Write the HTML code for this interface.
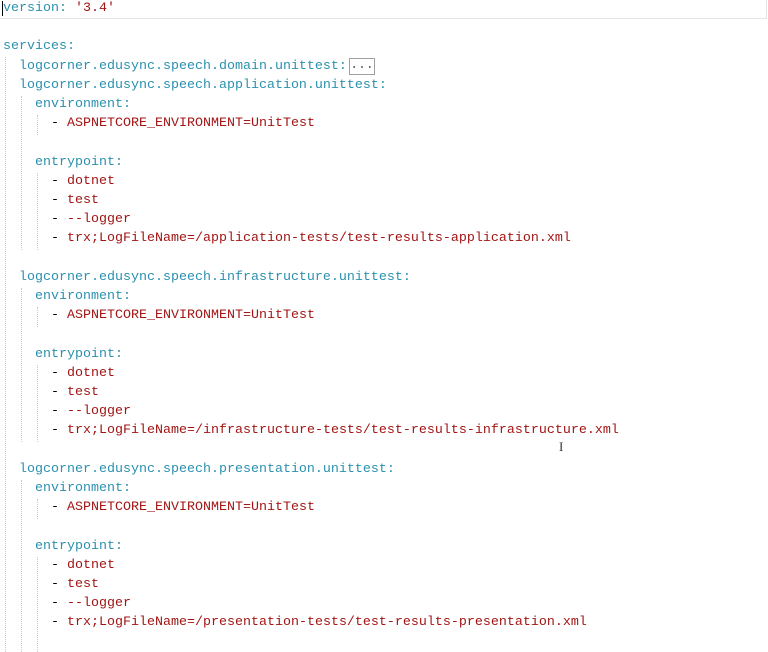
<!DOCTYPE html>
<html><head><style>
body{margin:0;width:768px;height:650px;background:#fff;overflow:hidden;position:relative;font-family:"Liberation Mono",monospace;font-size:13.33px}
#w{position:absolute;left:0;top:2px;width:768px;height:650px}
.l{position:absolute;left:3px;height:19.2px;line-height:19.2px;white-space:pre;color:#000}
.k{color:#2b91af}.v{color:#a31515}
.g{position:absolute;width:0;border-left:1px dotted #c8c8c8}
.cur{position:absolute;left:0;top:-4px;width:766px;height:19px;border:1px solid #e4e4e4;border-left:none}
</style></head><body>
<div id="w">
<div class="cur"></div>
<div style="position:absolute;left:2px;top:-1px;width:1px;height:15px;background:#000"></div>
<div class="g" style="left:5px;top:55px;height:595px"></div>
<div class="g" style="left:21px;top:94px;height:154px"></div>
<div class="g" style="left:21px;top:286px;height:154px"></div>
<div class="g" style="left:21px;top:478px;height:172px"></div>
<div class="g" style="left:37px;top:113px;height:20px"></div>
<div class="g" style="left:37px;top:171px;height:77px"></div>
<div class="g" style="left:37px;top:305px;height:20px"></div>
<div class="g" style="left:37px;top:363px;height:77px"></div>
<div class="g" style="left:37px;top:497px;height:20px"></div>
<div class="g" style="left:37px;top:555px;height:95px"></div>
<div class="l" style="top:-3px"><span class="k">version:</span> <span class="v">'3.4'</span></div>
<div class="l" style="top:35.4px"><span class="k">services:</span></div>
<div class="l" style="top:54.6px">  <span class="k">logcorner.edusync.speech.domain.unittest:</span></div>
<div style="position:absolute;left:349px;top:56px;width:24px;height:15px;border:1px solid #a0a0a0;font-size:13px;line-height:12px;text-align:center;color:#555">...</div>
<div class="l" style="top:73.8px">  <span class="k">logcorner.edusync.speech.application.unittest:</span></div>
<div class="l" style="top:93px">    <span class="k">environment:</span></div>
<div class="l" style="top:112.2px">      - <span class="v">ASPNETCORE_ENVIRONMENT=UnitTest</span></div>
<div class="l" style="top:150.6px">    <span class="k">entrypoint:</span></div>
<div class="l" style="top:169.8px">      - <span class="v">dotnet</span></div>
<div class="l" style="top:189px">      - <span class="v">test</span></div>
<div class="l" style="top:208.2px">      - <span class="v">--logger</span></div>
<div class="l" style="top:227.4px">      - <span class="v">trx;LogFileName=/application-tests/test-results-application.xml</span></div>
<div class="l" style="top:265.8px">  <span class="k">logcorner.edusync.speech.infrastructure.unittest:</span></div>
<div class="l" style="top:285px">    <span class="k">environment:</span></div>
<div class="l" style="top:304.2px">      - <span class="v">ASPNETCORE_ENVIRONMENT=UnitTest</span></div>
<div class="l" style="top:342.6px">    <span class="k">entrypoint:</span></div>
<div class="l" style="top:361.8px">      - <span class="v">dotnet</span></div>
<div class="l" style="top:381px">      - <span class="v">test</span></div>
<div class="l" style="top:400.2px">      - <span class="v">--logger</span></div>
<div class="l" style="top:419.4px">      - <span class="v">trx;LogFileName=/infrastructure-tests/test-results-infrastructure.xml</span></div>
<div class="l" style="top:457.8px">  <span class="k">logcorner.edusync.speech.presentation.unittest:</span></div>
<div class="l" style="top:477px">    <span class="k">environment:</span></div>
<div class="l" style="top:496.2px">      - <span class="v">ASPNETCORE_ENVIRONMENT=UnitTest</span></div>
<div class="l" style="top:534.6px">    <span class="k">entrypoint:</span></div>
<div class="l" style="top:553.8px">      - <span class="v">dotnet</span></div>
<div class="l" style="top:573px">      - <span class="v">test</span></div>
<div class="l" style="top:592.2px">      - <span class="v">--logger</span></div>
<div class="l" style="top:611.4px">      - <span class="v">trx;LogFileName=/presentation-tests/test-results-presentation.xml</span></div>
<div style="position:absolute;left:559px;top:437px;font-size:13px;color:#333;font-family:'Liberation Serif',serif">I</div>
</div>
</body></html>
